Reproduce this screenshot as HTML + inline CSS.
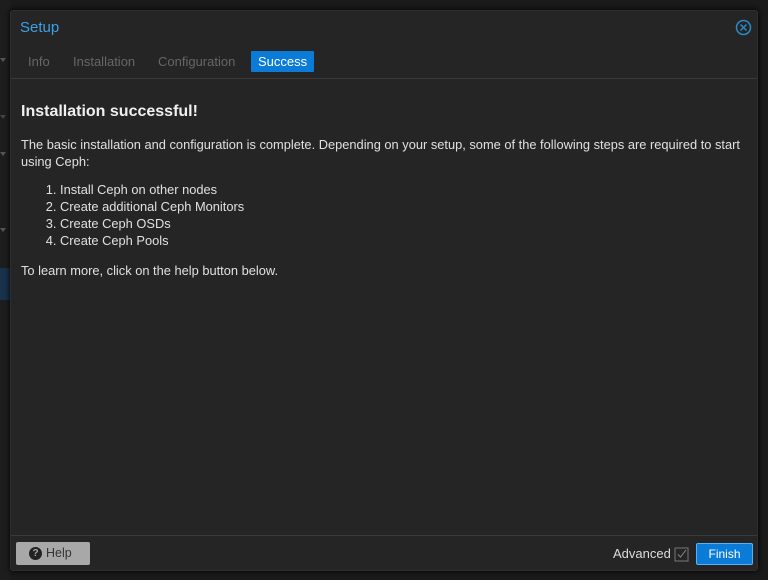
<!DOCTYPE html>
<html><head><style>
*{margin:0;padding:0;box-sizing:border-box}
body{width:768px;height:580px;background:#1a1a1a;font-family:"Liberation Sans",sans-serif;position:relative;overflow:hidden}
.side{position:absolute;left:0;top:0;width:10px;height:580px;background:#1d1d1d}
.arr{position:absolute;left:0;width:0;height:0;border-left:3px solid transparent;border-right:3px solid transparent;border-top:4px solid #555}
.win{position:absolute;left:10px;top:10px;width:748px;height:561px;background:#252525;border:1px solid #2e2e2e;border-radius:3px;box-shadow:0 0 6px #000}
.title{position:absolute;left:9px;top:8px;font-size:15px;color:#3ba0e6}
.close{position:absolute;right:5px;top:8px}
.tab{position:absolute;top:40px;font-size:13px;color:#666;height:21px;line-height:21px}
.tab.act{background:#0a7cd8;color:#fff;padding:0 7px;border-radius:1px}
.hl{position:absolute;left:0;right:0;height:1px;background:#3a3a3a}
.body{position:absolute;left:10px;top:92px;font-size:12.85px;color:#e0e0e0;line-height:17px;width:730px}
h1{font-size:16px;font-weight:bold;color:#f0f0f0;margin-bottom:16px}
ol{margin:11px 0 13px 39px}
.help{position:absolute;width:74px;height:23px;background:#a8a8a8;border-radius:2px;font-size:12.5px;color:#333;line-height:23px;padding-left:30px}
.help i{position:absolute;left:13px;top:5px;width:13px;height:13px;border-radius:50%;background:#222;color:#a8a8a8;font-style:normal;font-weight:bold;font-size:10px;line-height:13px;text-align:center}
.adv{position:absolute;font-size:13px;color:#ddd}
.fin{position:absolute;width:57px;height:22px;background:#0a7cd8;border:1px solid #5ab0f0;border-radius:2px;color:#fff;font-size:12px;text-align:center;line-height:20px}
</style></head><body>
<div class="side"></div>
<div class="arr" style="top:58px"></div>
<div class="arr" style="top:115px;border-top-color:#444"></div>
<div class="arr" style="top:152px"></div>
<div class="arr" style="top:228px"></div>
<div style="position:absolute;left:0;top:268px;width:10px;height:32px;background:#17324a"></div>
<div class="win">
<div class="title">Setup</div>
<svg class="close" width="17" height="17" viewBox="0 0 17 17"><circle cx="8.5" cy="8.5" r="7" fill="none" stroke="#2a8ac8" stroke-width="1.5"/><path d="M5.5 5.5L11.5 11.5M11.5 5.5L5.5 11.5" stroke="#2a8ac8" stroke-width="1.5"/></svg>
<div class="tab" style="left:17px">Info</div>
<div class="tab" style="left:62px">Installation</div>
<div class="tab" style="left:147px">Configuration</div>
<div class="tab act" style="left:240px">Success</div>
<div class="hl" style="top:67px"></div>
<div class="body">
<h1>Installation successful!</h1>
<p>The basic installation and configuration is complete. Depending on your setup, some of the following steps are required to start using Ceph:</p>
<ol><li>Install Ceph on other nodes</li><li>Create additional Ceph Monitors</li><li>Create Ceph OSDs</li><li>Create Ceph Pools</li></ol>
<p>To learn more, click on the help button below.</p>
</div>
<div class="hl" style="top:524px"></div>
</div>
<div class="help" style="left:16px;top:542px"><i>?</i>Help</div>
<div class="adv" style="left:613px;top:546px">Advanced</div>
<svg style="position:absolute;left:674px;top:547px" width="15" height="15" viewBox="0 0 15 15"><rect x="1" y="1" width="13" height="13" fill="none" stroke="#777"/><path d="M4 7.5L6.5 10L12 3" fill="none" stroke="#888" stroke-width="1"/></svg>
<div class="fin" style="left:696px;top:543px">Finish</div>
</body></html>
